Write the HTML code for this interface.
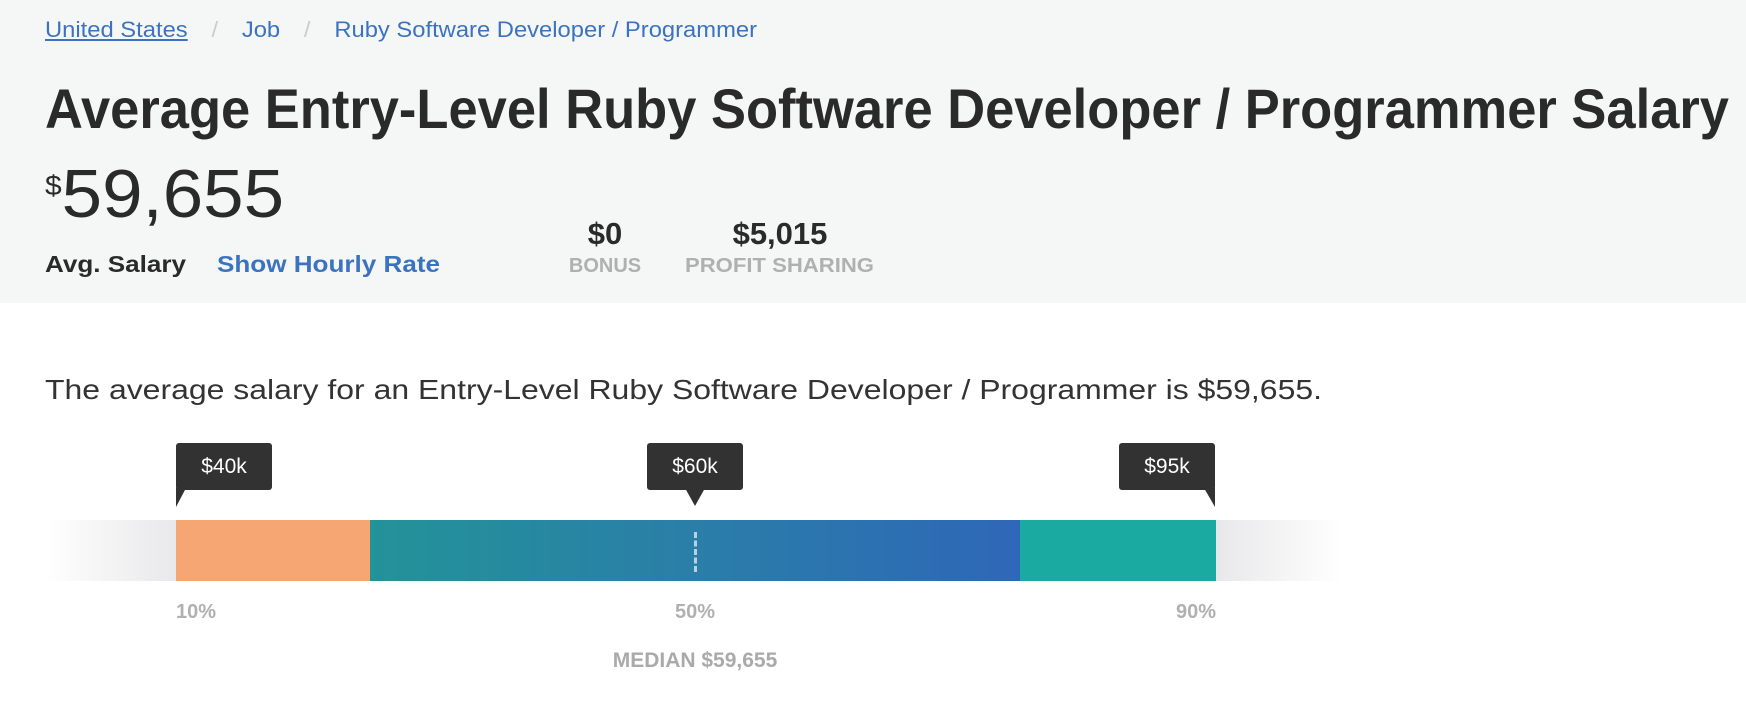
<!DOCTYPE html>
<html><head><meta charset="utf-8"><style>
*{margin:0;padding:0;box-sizing:border-box}
body{width:1746px;height:708px;background:#fff;font-family:"Liberation Sans",Arial,sans-serif;position:relative;overflow:hidden}
.hdr{position:absolute;left:0;top:0;width:1746px;height:303px;background:#f5f6f6}
.a{position:absolute;white-space:nowrap;line-height:1}
.fit{display:inline-block;transform-origin:0 0}
.tip{position:absolute;top:443px;width:96px;height:47px;background:#323232;border-radius:3px;color:#fff;font-size:21px;text-align:center;line-height:47px}
</style></head><body>
<div class="hdr"></div>
<div class="a" style="left:45px;top:19px;font-size:22px;color:#3c73c0"><span class="fit" id="t0"><span style="text-decoration:underline">United States</span><span style="color:#ccc;margin:0 22px">/</span>Job<span style="color:#ccc;margin:0 22px">/</span>Ruby Software Developer / Programmer</span></div>
<div class="a" style="left:45px;top:81px;font-size:56px;font-weight:bold;color:#2a2a2a"><span class="fit" id="t1">Average Entry-Level Ruby Software Developer / Programmer Salary</span></div>
<div class="a" style="left:45px;top:160px;color:#2a2a2a"><span class="fit" id="t2"><span style="font-size:28px;vertical-align:22px">$</span><span style="font-size:68px">59,655</span></span></div>
<div class="a" style="left:45px;top:253px;font-size:23px;font-weight:bold;color:#2a2a2a"><span class="fit" id="t3">Avg. Salary</span></div>
<div class="a" style="left:217px;top:253px;font-size:23px;font-weight:bold;color:#3c73c0"><span class="fit" id="t4">Show Hourly Rate</span></div>
<div class="a" style="left:565px;top:218px;width:80px;text-align:center;font-size:31px;font-weight:bold;color:#2a2a2a">$0</div>
<div class="a" style="left:555px;top:256px;width:100px;text-align:center;font-size:20px;font-weight:bold;color:#b0b0b0">BONUS</div>
<div class="a" style="left:700px;top:218px;width:160px;text-align:center;font-size:31px;font-weight:bold;color:#2a2a2a">$5,015</div>
<div class="a" style="left:685px;top:256px;font-size:20px;font-weight:bold;color:#b0b0b0"><span class="fit" id="t5">PROFIT SHARING</span></div>
<div class="a" style="left:45px;top:376px;font-size:28px;color:#333"><span class="fit" id="t6">The average salary for an Entry-Level Ruby Software Developer / Programmer is $59,655.</span></div>

<div class="tip" style="left:176px">$40k</div>
<svg class="a" style="left:176px;top:488px" width="12" height="20"><path d="M0 0H10L0 19Z" fill="#323232"/></svg>
<div class="tip" style="left:647px">$60k</div>
<svg class="a" style="left:685px;top:488px" width="20" height="20"><path d="M0 0H20L10 18Z" fill="#323232"/></svg>
<div class="tip" style="left:1119px">$95k</div>
<svg class="a" style="left:1203px;top:488px" width="12" height="20"><path d="M1 0H12V19Z" fill="#323232"/></svg>

<div class="a" style="left:45px;top:520px;width:131px;height:61px;background:linear-gradient(90deg,#fff,#e8e8ea)"></div>
<div class="a" style="left:176px;top:520px;width:194px;height:61px;background:#f5a673"></div>
<div class="a" style="left:370px;top:520px;width:650px;height:61px;background:linear-gradient(90deg,#239398,#2a7ea8,#2e67b8)"></div>
<div class="a" style="left:1020px;top:520px;width:196px;height:61px;background:#1aaaa2"></div>
<div class="a" style="left:1216px;top:520px;width:126px;height:61px;background:linear-gradient(90deg,#e8e8ea,#fff)"></div>
<div class="a" style="left:694px;top:532px;width:0;height:40px;border-left:3px dashed #b8d0e6"></div>

<div class="a" style="left:176px;top:602px;font-size:20px;font-weight:bold;color:#b0b0b0">10%</div>
<div class="a" style="left:645px;top:602px;width:100px;text-align:center;font-size:20px;font-weight:bold;color:#b0b0b0">50%</div>
<div class="a" style="left:1116px;top:602px;width:100px;text-align:right;font-size:20px;font-weight:bold;color:#b0b0b0">90%</div>
<div class="a" style="left:545px;top:650px;width:300px;text-align:center;font-size:21px;font-weight:bold;color:#aaa">MEDIAN $59,655</div>
<script>
var W={t0:712,t1:1684,t2:239,t3:141,t4:223,t5:189,t6:1277};
for(var k in W){var e=document.getElementById(k);var w=e.getBoundingClientRect().width;if(w>0)e.style.transform='scaleX('+(W[k]/w)+')';}
</script>
</body></html>
